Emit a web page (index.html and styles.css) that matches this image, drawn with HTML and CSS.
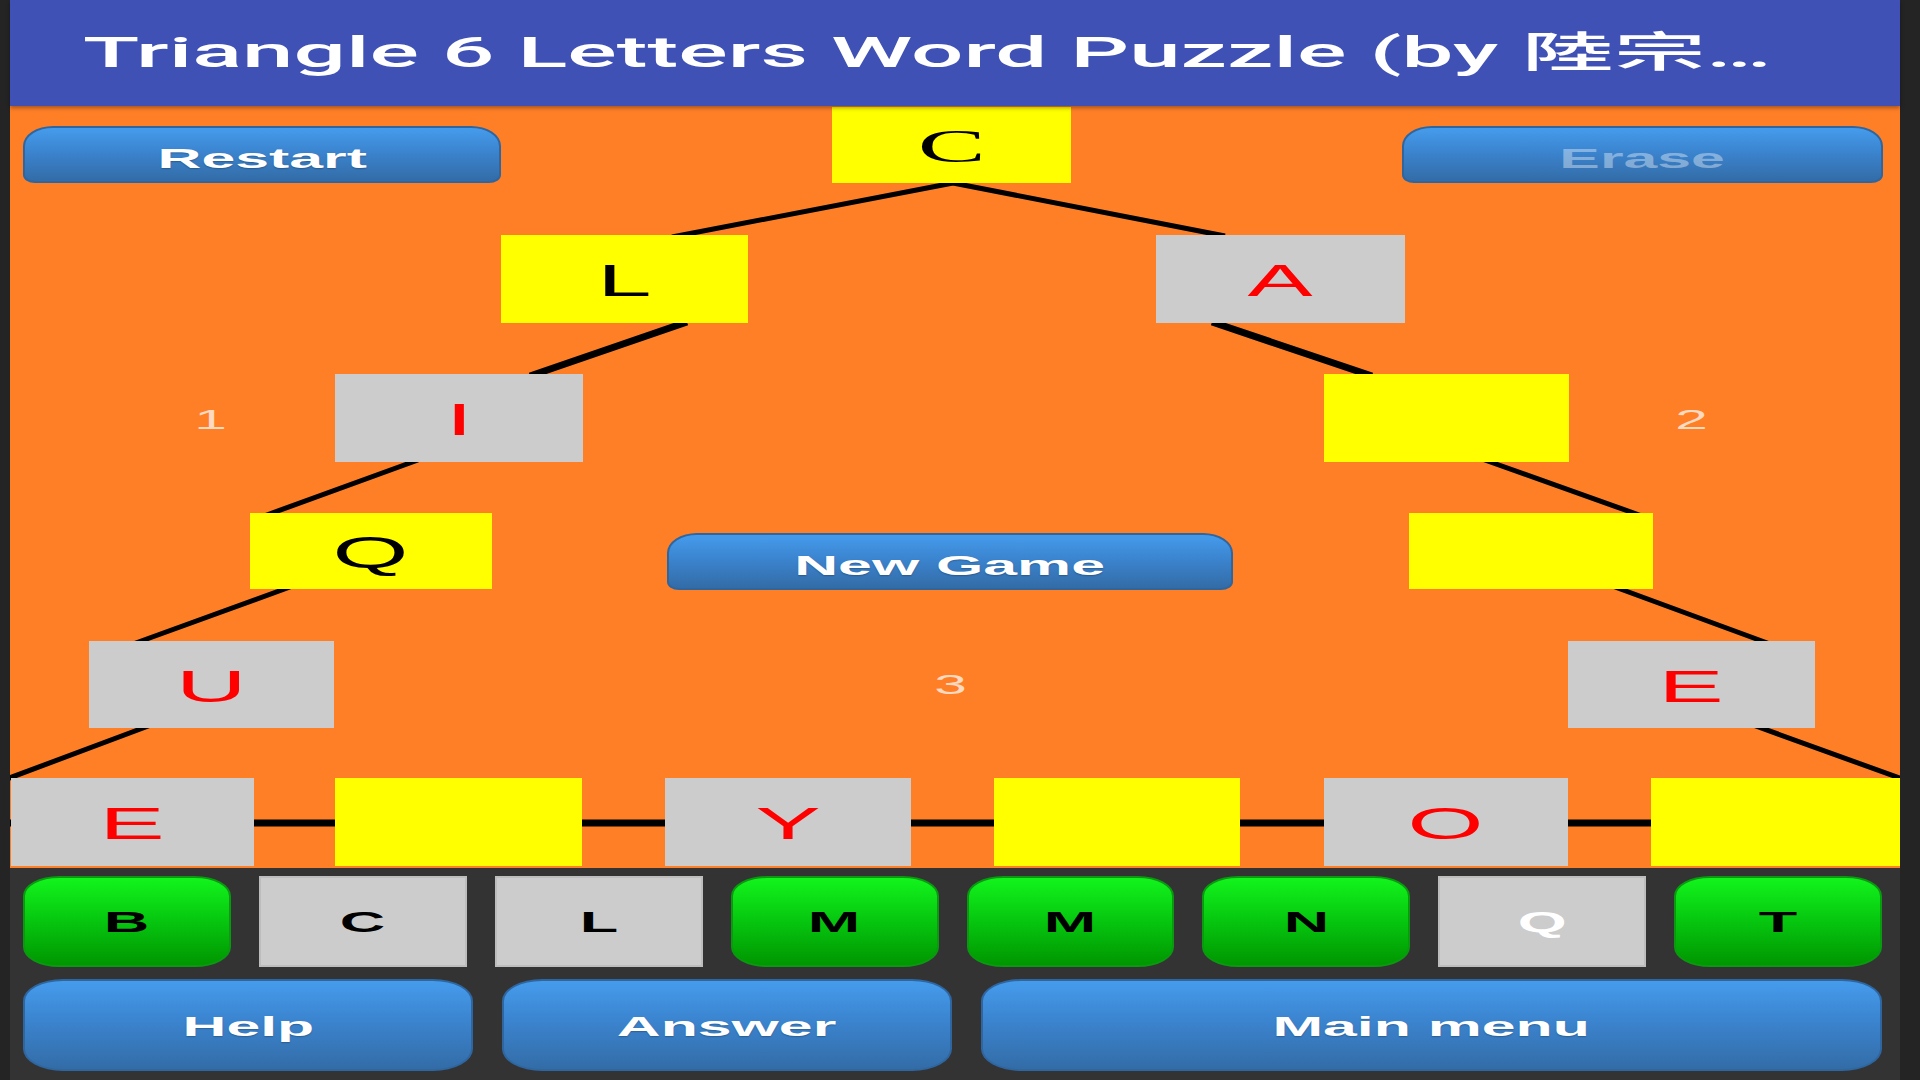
FILE: index.html
```html
<!DOCTYPE html>
<html lang="en">
<head>
<meta charset="utf-8">
<title>Triangle 6 Letters Word Puzzle</title>
<link rel="stylesheet" href="styles.css">
</head>
<body>
<div class="app">
  <header class="appbar">
    <h1 class="title"><span class="sx">Triangle 6 Letters Word Puzzle (by 陸宗…</span></h1>
  </header>

  <main class="board">
    <svg class="links" width="1890" height="762" viewBox="10 106 1890 762" aria-hidden="true">
      <g stroke="#000" fill="none" stroke-linecap="butt">
        <path stroke-width="5" d="M953 183 L672 237 M418 460 L264 516 M290 587 L133 644 M151 725 L4 780"/>
        <path stroke-width="7" d="M687 322 L530 376 M1212 322 L1372 376"/>
        <path stroke-width="5" d="M953 183 L1225 236 M1482 459 L1642 516 M1615 587 L1770 644 M1753 725 L1905 780"/>
        <path stroke-width="7" d="M10 823 H1900"/>
      </g>
    </svg>

    <button class="btn btn-top btn-restart"><span class="sx">Restart</span></button>
    <button class="btn btn-top btn-erase" disabled><span class="sx">Erase</span></button>
    <button class="btn btn-newgame"><span class="sx">New Game</span></button>

    <span class="num num-1"><span class="sx">1</span></span>
    <span class="num num-2"><span class="sx">2</span></span>
    <span class="num num-3"><span class="sx">3</span></span>

    <div class="tile fixed serif t-c"><span class="sx">C</span></div>
    <div class="tile fixed t-l"><span class="sx">L</span></div>
    <div class="tile open t-a"><span class="sx">A</span></div>
    <div class="tile open t-i"><span class="sx">I</span></div>
    <div class="tile fixed t-r3"></div>
    <div class="tile fixed t-q"><span class="sx">Q</span></div>
    <div class="tile fixed t-r4"></div>
    <div class="tile open t-u"><span class="sx">U</span></div>
    <div class="tile open t-e2"><span class="sx">E</span></div>
    <div class="tile open t-b1"><span class="sx">E</span></div>
    <div class="tile fixed t-b2"></div>
    <div class="tile open t-b3"><span class="sx">Y</span></div>
    <div class="tile fixed t-b4"></div>
    <div class="tile open t-b5"><span class="sx">O</span></div>
    <div class="tile fixed t-b6"></div>
  </main>

  <section class="controls">
    <div class="keys">
      <button class="key key-on"><span class="sx">B</span></button>
      <button class="key key-off"><span class="sx">C</span></button>
      <button class="key key-off"><span class="sx">L</span></button>
      <button class="key key-on"><span class="sx">M</span></button>
      <button class="key key-on"><span class="sx">M</span></button>
      <button class="key key-on"><span class="sx">N</span></button>
      <button class="key key-off key-dim"><span class="sx">Q</span></button>
      <button class="key key-on"><span class="sx">T</span></button>
    </div>
    <div class="actions">
      <button class="btn btn-action"><span class="sx">Help</span></button>
      <button class="btn btn-action"><span class="sx">Answer</span></button>
      <button class="btn btn-action"><span class="sx">Main menu</span></button>
    </div>
  </section>
</div>
</body>
</html>
```

FILE: styles.css
```css
* { box-sizing: border-box; }

html, body {
  margin: 0;
  padding: 0;
}

body {
  width: 1920px;
  height: 1080px;
  overflow: hidden;
  background: #242424;
  font-family: "Liberation Sans", Arial, sans-serif;
}

.sx {
  display: inline-block;
  transform: scaleX(2.17);
  transform-origin: center center;
  white-space: nowrap;
}

.app {
  margin-left: 10px;
  width: 1890px;
  height: 1080px;
  background: #333333;
  display: flex;
  flex-direction: column;
}

/* ---------- app bar ---------- */
.appbar {
  height: 106px;
  flex: none;
  background: #3f51b5;
  display: flex;
  align-items: center;
  padding-left: 73px;
  position: relative;
  z-index: 2;
  box-shadow: 0 2px 4px rgba(0, 0, 0, 0.35);
}

.title {
  margin: 0;
  color: #ffffff;
  font-family: Roboto, "Noto Sans CJK TC", sans-serif;
  font-weight: 500;
  font-size: 42px;
  line-height: 1;
  white-space: nowrap;
}

.title .sx {
  transform: scaleX(2.2);
  transform-origin: left center;
}

/* ---------- board ---------- */
.board {
  position: relative;
  height: 762px;
  flex: none;
  background: #ff7f27;
  overflow: hidden;
}

.links {
  position: absolute;
  left: 0;
  top: 0;
}

.tile {
  position: absolute;
  display: flex;
  align-items: center;
  justify-content: center;
  font-family: "Liberation Sans", Arial, sans-serif;
  font-size: 45px;
  line-height: 1;
  padding-top: 3px;
}

.tile.fixed { background: #ffff00; color: #000000; }
.tile.open { background: #cccccc; color: #ff0000; }
.tile.serif { font-family: "Liberation Serif", "Times New Roman", serif; font-size: 47px; }

.t-c  { left: 822px;  top: 1px;   width: 239px; height: 76px; }
.t-l  { left: 491px;  top: 129px; width: 247px; height: 88px; }
.t-a  { left: 1146px; top: 129px; width: 249px; height: 88px; }
.t-i  { left: 325px;  top: 268px; width: 248px; height: 88px; }
.t-r3 { left: 1314px; top: 268px; width: 245px; height: 88px; }
.t-q  { left: 240px;  top: 407px; width: 242px; height: 76px; }
.t-r4 { left: 1399px; top: 407px; width: 244px; height: 76px; }
.t-u  { left: 79px;   top: 535px; width: 245px; height: 87px; }
.t-e2 { left: 1558px; top: 535px; width: 247px; height: 87px; }
.t-b1 { left: 1px;    top: 672px; width: 243px; height: 88px; }
.t-b2 { left: 325px;  top: 672px; width: 247px; height: 88px; }
.t-b3 { left: 655px;  top: 672px; width: 246px; height: 88px; }
.t-b4 { left: 984px;  top: 672px; width: 246px; height: 88px; }
.t-b5 { left: 1314px; top: 672px; width: 244px; height: 88px; }
.t-b6 { left: 1641px; top: 672px; width: 249px; height: 88px; }

.num {
  position: absolute;
  width: 40px;
  margin-left: -20px;
  text-align: center;
  font-size: 27px;
  line-height: 1;
  color: #ffd9c0;
}
.num-1 { left: 201px;  top: 301px; }
.num-2 { left: 1682px; top: 301px; }
.num-3 { left: 941px;  top: 566px; }

/* ---------- buttons ---------- */
.btn {
  margin: 0;
  padding: 5px 0 0;
  border: 2px solid #2f66a0;
  background: linear-gradient(to bottom, #459cec 0%, #3b84cf 45%, #336ca7 100%);
  color: #ffffff;
  font-family: "Liberation Sans", Arial, sans-serif;
  font-weight: bold;
  font-size: 28px;
  line-height: 1;
  text-shadow: 0 1px 1px rgba(0, 0, 0, 0.25);
  display: flex;
  align-items: center;
  justify-content: center;
  cursor: pointer;
}

.btn-top,
.btn-newgame {
  position: absolute;
  height: 57px;
  padding-top: 9px;
  border-radius: 30px 30px 12px 12px / 20px 20px 8px 8px;
}
.btn-restart { left: 13px;   top: 20px;  width: 478px; }
.btn-erase   { left: 1392px; top: 20px;  width: 481px; color: rgba(255, 255, 255, 0.38); text-shadow: none; }
.btn-newgame { left: 657px;  top: 427px; width: 566px; }

/* ---------- controls ---------- */
.controls {
  flex: 1;
  padding: 8px 18px 0 13px;
  display: flex;
  flex-direction: column;
  gap: 12px;
}

.keys {
  height: 91px;
  display: grid;
  grid-template-columns: repeat(8, 1fr);
  column-gap: 28px;
}

.key {
  margin: 0;
  padding: 2px 0 0;
  font-family: "Liberation Sans", Arial, sans-serif;
  font-weight: bold;
  font-size: 29px;
  line-height: 1;
  color: #000000;
  display: flex;
  align-items: center;
  justify-content: center;
}

.key-on {
  border: 2px solid #0a9a10;
  border-radius: 36px / 20px;
  background: linear-gradient(to bottom, #12f41c 0%, #06c60f 50%, #009600 100%);
}

.key-off {
  border: 2px solid #bdbdbd;
  border-radius: 0;
  background: #cccccc;
}

.key-dim { color: #ffffff; }

.actions {
  height: 92px;
  display: grid;
  grid-template-columns: 450px 450px 1fr;
  column-gap: 29px;
}

.btn-action {
  border-radius: 40px / 22px;
  padding-top: 4px;
}
```
